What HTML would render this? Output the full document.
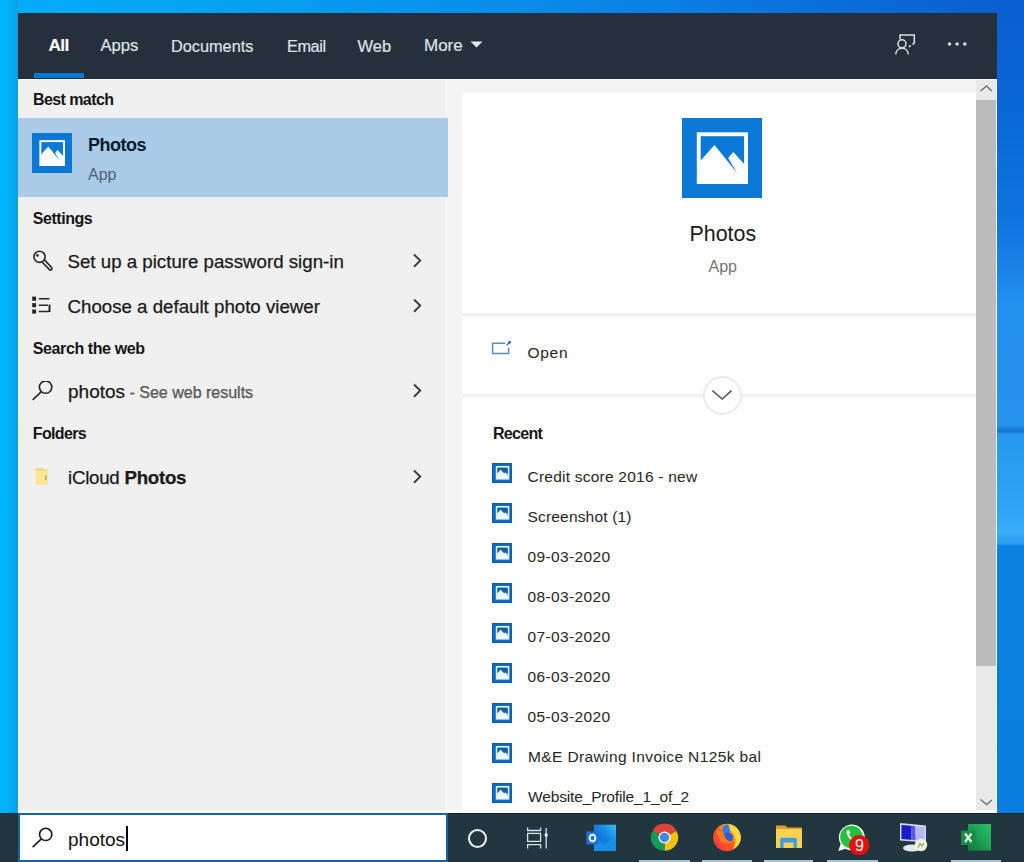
<!DOCTYPE html>
<html><head><meta charset="utf-8">
<style>
*{margin:0;padding:0;box-sizing:border-box}
html,body{width:1024px;height:862px;overflow:hidden;font-family:"Liberation Sans",sans-serif}
body{position:relative;background:#0a7ae0}
.a{position:absolute}
.t{position:absolute;white-space:nowrap;line-height:1}
#bg{left:0;top:0;width:1024px;height:862px;background:linear-gradient(90deg,#02b4fc 0px,#01b0f8 8px,#04a8ee 14px,#10a0e0 18px)}
#bgr{left:990px;top:0;width:34px;height:862px;background:linear-gradient(180deg,#0a5ed0 0px,#0a68d8 120px,#0f74e0 220px,#1a82e8 270px,#2290ee 300px,#2592ec 426px,#1878d8 429px,#1878d8 432px,#2898f0 434px,#2ea2f4 500px,#38acf8 528px,#3aaef8 532px,#2a98ee 544px,#0a80e0 546px,#0a7ee0 812px)}
#bgt{left:18px;top:0;width:1006px;height:14px;background:linear-gradient(90deg,#04acf8 0px,#069cf0 282px,#0a86e6 582px,#0a6cd8 832px,#0a5ed0 1006px)}
#hdr{left:18px;top:13px;width:979px;height:65.6px;background:#25303c}
.tab{color:#dfe2e5;font-size:16.3px;top:37.6px;-webkit-text-stroke:0.2px #dfe2e5}
#ind{left:34px;top:72.5px;width:50px;height:5px;background:#0078d7}
#left{left:18px;top:78.6px;width:427px;height:731.4px;background:#f0f0f0;border-top:1.4px solid #fafafa}
#rgap{left:445px;top:78.6px;width:552px;height:731.4px;background:#f4f4f4;border-top:1.4px solid #fafafa}
#sel{left:18px;top:118px;width:430px;height:79px;background:#aacce9}
.hd{font-weight:bold;font-size:16px;color:#151515}
.it{font-size:18.7px;color:#1a1a1a;-webkit-text-stroke:0.25px #1a1a1a}
#rp{left:462px;top:93px;width:514px;height:717px;background:#fff}
#bstrip{left:18px;top:810px;width:979px;height:3px;background:#f9f9f9}
#sb{left:976px;top:80px;width:20px;height:730px;background:#e9e9e9}
#thumb{left:976px;top:100px;width:20px;height:565.5px;background:#bbbbbb}
.rc{font-size:15.5px;color:#262626;letter-spacing:0.23px}
#task{left:0;top:813px;width:1024px;height:49px;background:#21363f;border-top:1px solid #15212a}
#sbox{left:17.5px;top:813px;width:430.5px;height:49px;background:#fff;border:2.5px solid #1862a8;border-bottom-width:2.5px}
</style></head>
<body>
<div id="bg" class="a"></div><div id="bgr" class="a"></div><div id="bgt" class="a"></div>
<div id="hdr" class="a"></div>
<div class="t tab" style="left:48.4px;color:#fff;font-size:17.3px;top:37px;font-weight:bold;letter-spacing:-0.6px">All</div>
<div class="t tab" style="left:100.5px;font-size:16.6px">Apps</div>
<div class="t tab" style="left:171px">Documents</div>
<div class="t tab" style="left:287px;letter-spacing:-0.4px">Email</div>
<div class="t tab" style="left:357.5px;font-size:16.5px">Web</div>
<div class="t tab" style="left:424px;font-size:17px;top:36.6px">More</div>
<svg class="a" style="left:470px;top:41px" width="13" height="7" viewBox="0 0 13 7"><path d="M0.5 0.5 L12.5 0.5 L6.5 6.5 Z" fill="#e6e8ea"/></svg>
<div id="ind" class="a"></div>
<!-- feedback icon -->
<svg class="a" style="left:890px;top:30px" width="30" height="30" viewBox="0 0 30 30" fill="none" stroke="#d8dde2" stroke-width="1.6">
  <path d="M10 9.2 V5 H24.3 V12.9 L22.5 14.5"/>
  <path d="M19 17 L20.8 15.4"/>
  <circle cx="12" cy="13.8" r="4"/>
  <path d="M5.6 24.3 C6 20.3 9 18.2 12 18.2 C15 18.2 18 20.3 18.4 24.3"/>
</svg>
<!-- ellipsis -->
<svg class="a" style="left:945px;top:40px" width="24" height="8" viewBox="0 0 24 8"><circle cx="4.5" cy="4" r="1.8" fill="#d6d9dc"/><circle cx="12.1" cy="4" r="1.8" fill="#d6d9dc"/><circle cx="19.8" cy="4" r="1.8" fill="#d6d9dc"/></svg>

<div id="rgap" class="a"></div>
<div id="left" class="a"></div>
<div id="sel" class="a"></div>
<div class="t hd" style="left:33px;top:92px;letter-spacing:-0.58px">Best match</div>
<svg class="a" style="left:32px;top:133px" width="40" height="40" viewBox="0 0 80 80"><use href="#ph"/></svg>
<div class="t" style="left:88px;top:135.6px;font-size:18px;letter-spacing:-0.5px;font-weight:bold;color:#0b1a2a">Photos</div>
<div class="t" style="left:88px;top:167px;font-size:16px;color:#4d6274">App</div>

<div class="t hd" style="left:32.8px;top:211px;letter-spacing:-0.45px">Settings</div>
<div class="t it" style="left:67.5px;top:252.9px">Set up a picture password sign-in</div>
<div class="t it" style="left:67.5px;top:297.7px">Choose a default photo viewer</div>
<div class="t hd" style="left:32.8px;top:341.1px;letter-spacing:-0.4px">Search the web</div>
<div class="t it" style="left:68px;top:382.4px;font-size:19px">photos<span style="font-size:16px;color:#6b6b6b"> - See web results</span></div>
<div class="t hd" style="left:32.8px;top:426.1px;letter-spacing:-0.64px">Folders</div>
<div class="t it" style="left:68px;top:468.5px;letter-spacing:-0.25px">iCloud <b style="font-weight:bold">Photos</b></div>


<!-- key icon -->
<svg class="a" style="left:31px;top:250px" width="24" height="22" viewBox="0 0 24 22" fill="none" stroke="#262626" stroke-width="1.6">
  <circle cx="8.5" cy="6.8" r="5.6"/>
  <path d="M13.3 9.6 L20.56 17.54 A1.5 1.5 0 0 1 18.44 19.66 L11.3 12.2" stroke-linejoin="round"/>
  <circle cx="6.4" cy="5.4" r="1.3" fill="#262626" stroke="none"/>
</svg>
<!-- list icon -->
<svg class="a" style="left:32px;top:295px" width="22" height="20" viewBox="0 0 22 20">
  <rect x="0.2" y="1.6" width="3.9" height="4.2" fill="#262626"/>
  <rect x="0.2" y="8.1" width="3.9" height="4.1" fill="#262626"/>
  <rect x="0.2" y="14.5" width="3.9" height="4.1" fill="#262626"/>
  <path d="M6.8 3.7 H17.5 M6.8 10.2 H16 M6.8 16.5 H17" stroke="#262626" stroke-width="1.5" fill="none"/>
  <path d="M17.5 9.6 V17" stroke="#111" stroke-width="1.8" fill="none"/>
</svg>
<!-- search icon -->
<svg class="a" style="left:31px;top:381px" width="24" height="22" viewBox="0 0 24 22" fill="none" stroke="#222" stroke-width="1.6">
  <circle cx="14.6" cy="6.1" r="6.2"/>
  <path d="M10.4 10.6 L1.7 18.8"/>
</svg>
<!-- folder icon -->
<svg class="a" style="left:34px;top:466px" width="16" height="20" viewBox="0 0 16 20">
  <path d="M1.7 2 H9 L10.5 3.5 H13.5 V18.4 H1.7 Z" fill="#f0dc80"/>
  <path d="M1.7 5 H13.5 V18.4 H1.7 Z" fill="#fde690"/>
  <rect x="11" y="9.5" width="1.6" height="4.5" fill="#c0a870"/>
</svg>
<svg class="a" style="left:411px;top:253px" width="12" height="16" viewBox="0 0 12 16"><path d="M3 1.5 L9.2 7.6 L3 13.7" fill="none" stroke="#3a3a3a" stroke-width="1.9"/></svg><svg class="a" style="left:411px;top:298px" width="12" height="16" viewBox="0 0 12 16"><path d="M3 1.5 L9.2 7.6 L3 13.7" fill="none" stroke="#3a3a3a" stroke-width="1.9"/></svg><svg class="a" style="left:411px;top:383px" width="12" height="16" viewBox="0 0 12 16"><path d="M3 1.5 L9.2 7.6 L3 13.7" fill="none" stroke="#3a3a3a" stroke-width="1.9"/></svg><svg class="a" style="left:411px;top:469px" width="12" height="16" viewBox="0 0 12 16"><path d="M3 1.5 L9.2 7.6 L3 13.7" fill="none" stroke="#3a3a3a" stroke-width="1.9"/></svg>
<div id="rp" class="a"></div><div id="bstrip" class="a"></div>
<div id="sb" class="a"></div>
<div id="thumb" class="a"></div>

<svg class="a" style="left:682px;top:118px" width="80" height="80" viewBox="0 0 80 80"><use href="#ph"/></svg>
<div class="t" style="left:689.5px;top:224.4px;font-size:21.4px;color:#1a1a1a">Photos</div>
<div class="t" style="left:708.5px;top:259.3px;font-size:16px;color:#767676">App</div>

<div class="t rc" style="left:527.5px;top:345.0px;letter-spacing:0.7px">Open</div>
<div class="t hd" style="left:493px;top:425.5px;letter-spacing:-0.7px">Recent</div>
<div class="t rc" style="left:527.5px;top:469.1px">Credit score 2016 - new</div>
<div class="t rc" style="left:527.5px;top:509.1px;letter-spacing:0.18px">Screenshot (1)</div>
<div class="t rc" style="left:527.5px;top:549.1px;letter-spacing:0.38px">09-03-2020</div>
<div class="t rc" style="left:527.5px;top:589.1px;letter-spacing:0.38px">08-03-2020</div>
<div class="t rc" style="left:527.5px;top:629.1px;letter-spacing:0.38px">07-03-2020</div>
<div class="t rc" style="left:527.5px;top:669.1px;letter-spacing:0.38px">06-03-2020</div>
<div class="t rc" style="left:527.5px;top:709.1px;letter-spacing:0.38px">05-03-2020</div>
<div class="t rc" style="left:528px;top:749.1px;letter-spacing:0.38px">M&amp;E Drawing Invoice N125k bal</div>
<div class="t rc" style="left:528px;top:789.1px;letter-spacing:-0.15px">Website_Profile_1_of_2</div>


<div class="a" style="left:462px;top:313px;width:514px;height:3px;background:#f1f1f1"></div>
<div class="a" style="left:462px;top:394px;width:514px;height:3px;background:#f1f1f1"></div>
<div class="a" style="left:702.5px;top:375.5px;width:39.5px;height:39px;border-radius:50%;background:#fff;border:2px solid #ececec"></div>
<svg class="a" style="left:711px;top:387px" width="24" height="16" viewBox="0 0 24 16"><path d="M1.4 3.6 L11.3 12 L20.5 3.6" fill="none" stroke="#555" stroke-width="1.5"/></svg>
<!-- open icon -->
<svg class="a" style="left:490px;top:338px" width="24" height="20" viewBox="0 0 24 20" fill="none">
  <path d="M15 5.2 H2.6 V15.6 H18.6 V9.5" stroke="#5a8cba" stroke-width="1.5"/>
  <path d="M16.5 7.6 L19.3 4.6" stroke="#3f7cc0" stroke-width="1.4"/>
  <circle cx="19.6" cy="4.3" r="1.5" fill="#2f6fc0"/>
</svg>
<!-- scroll arrows -->
<svg class="a" style="left:979px;top:83px" width="15" height="10" viewBox="0 0 15 10"><path d="M1.5 8 L7.6 3 L12.8 8" fill="none" stroke="#707070" stroke-width="1.4"/></svg>
<svg class="a" style="left:979px;top:797px" width="15" height="10" viewBox="0 0 15 10"><path d="M1.5 2.5 L7.7 7.5 L12.8 3" fill="none" stroke="#707070" stroke-width="1.4"/></svg>
<svg class="a" style="left:492px;top:463px" width="20" height="20" viewBox="0 0 20 20"><use href="#phs"/></svg><svg class="a" style="left:492px;top:503px" width="20" height="20" viewBox="0 0 20 20"><use href="#phs"/></svg><svg class="a" style="left:492px;top:543px" width="20" height="20" viewBox="0 0 20 20"><use href="#phs"/></svg><svg class="a" style="left:492px;top:583px" width="20" height="20" viewBox="0 0 20 20"><use href="#phs"/></svg><svg class="a" style="left:492px;top:623px" width="20" height="20" viewBox="0 0 20 20"><use href="#phs"/></svg><svg class="a" style="left:492px;top:663px" width="20" height="20" viewBox="0 0 20 20"><use href="#phs"/></svg><svg class="a" style="left:492px;top:703px" width="20" height="20" viewBox="0 0 20 20"><use href="#phs"/></svg><svg class="a" style="left:492px;top:743px" width="20" height="20" viewBox="0 0 20 20"><use href="#phs"/></svg><svg class="a" style="left:492px;top:783px" width="20" height="20" viewBox="0 0 20 20"><use href="#phs"/></svg>
<div id="task" class="a"></div>
<div id="sbox" class="a"></div>
<div class="t" style="left:68px;top:829.9px;font-size:19px;color:#111">photos</div>
<div class="a" style="left:126px;top:826px;width:1.5px;height:25px;background:#000"></div>


<!-- search box icon -->
<svg class="a" style="left:30px;top:826px" width="24" height="24" viewBox="0 0 24 24" fill="none" stroke="#1a1a1a" stroke-width="1.6">
  <circle cx="15.7" cy="8.4" r="6.1"/>
  <path d="M11.4 12.8 L2.7 21.1"/>
</svg>
<!-- cortana -->
<div class="a" style="left:467.8px;top:828.6px;width:19.6px;height:19.4px;border-radius:50%;border:2.6px solid #eef2f4"></div>
<!-- task view -->
<svg class="a" style="left:520px;top:820px" width="35" height="35" viewBox="0 0 35 35" fill="none" stroke="#d8e2e6" stroke-width="1.3">
  <path d="M7.6 7.5 V10.5 H20.6 V7.5"/>
  <rect x="7.6" y="13.4" width="13" height="8"/>
  <path d="M7.6 28.5 V24.6 H20.6 V28.5"/>
  <path d="M26.2 8 V28.5"/>
  <circle cx="26.2" cy="15" r="1.7" fill="#e8eef0" stroke="none"/>
</svg>
<!-- outlook -->
<svg class="a" style="left:584px;top:822px" width="34" height="30" viewBox="0 0 34 30">
  <defs><linearGradient id="olg" x1="0" y1="1" x2="1" y2="0"><stop offset="0" stop-color="#0a5cc8"/><stop offset="0.6" stop-color="#1688e0"/><stop offset="1" stop-color="#3cc0f8"/></linearGradient></defs>
  <rect x="10" y="2.7" width="22" height="26.3" fill="url(#olg)"/>
  <path d="M10 16 L21 22 L32 16 L32 29 L10 29 Z" fill="#1a8ee6"/>
  <rect x="2.3" y="9.6" width="12.4" height="13" rx="1" fill="#1a72d8"/>
  <ellipse cx="8.5" cy="16.1" rx="2.9" ry="3.4" fill="none" stroke="#f4faff" stroke-width="1.9"/>
</svg>
<!-- chrome -->
<svg class="a" style="left:650px;top:823px" width="29" height="29" viewBox="0 0 48 48">
  <path d="M24 24 L4.3 13.1 A22 22 0 0 1 43.7 13.1 Z" fill="#db4437"/>
  <path d="M24 24 L43.7 13.1 A22 22 0 0 1 24 46 Z" fill="#f4c20d"/>
  <path d="M24 24 L24 46 A22 22 0 0 1 4.3 13.1 Z" fill="#0f9d58"/>
  <circle cx="24" cy="24" r="10" fill="#fff"/>
  <circle cx="24" cy="24" r="7.8" fill="#4285f4"/>
</svg>
<!-- firefox -->
<svg class="a" style="left:712px;top:822px" width="30" height="30" viewBox="0 0 30 30">
  <defs><linearGradient id="ffg" x1="0" y1="1" x2="1" y2="0"><stop offset="0" stop-color="#ff2a5a"/><stop offset="0.45" stop-color="#ff5a1a"/><stop offset="0.75" stop-color="#ffb21a"/><stop offset="1" stop-color="#ffe84a"/></linearGradient></defs>
  <circle cx="15" cy="15.5" r="13.8" fill="url(#ffg)"/>
  <ellipse cx="14.5" cy="7.5" rx="4" ry="5" fill="#2f7de8"/>
  <circle cx="16" cy="15.5" r="5" fill="#2a5ad8"/>
  <path d="M4 9 C7.5 8 11 10 12.5 13 C13.5 17 15.5 19.5 20 19 C16.5 22.5 10 22 7.5 17.5 Z" fill="#ff7a1a"/>
  <path d="M16.5 2.5 C23.5 3 28.8 9 28.8 15.5 C28.8 20.5 25.5 25 21 27 C25 20.5 24 12 18 8 Z" fill="#ffd83a"/>
</svg>
<!-- explorer -->
<svg class="a" style="left:775px;top:825px" width="28" height="24" viewBox="0 0 28 24">
  <path d="M1 0.5 H10 L12.5 2.5 H27 V23 H1 Z" fill="#e0a020"/>
  <rect x="1" y="4" width="26" height="19" fill="#fcd050"/>
  <path d="M5.2 23 V14.5 Q5.2 12.8 7 12.8 H20 Q21.8 12.8 21.8 14.5 V23 H18.5 V17.5 H8.5 V23 Z" fill="#3a9ee0"/>
</svg>
<!-- whatsapp -->
<svg class="a" style="left:830px;top:815px" width="40" height="40" viewBox="0 0 40 40">
  <path d="M8.3 36 L10.6 29 A13 13 0 1 1 15.5 33.8 Z" fill="#f4fff4"/>
  <circle cx="21.4" cy="22" r="11.2" fill="#23c23e"/>
  <path d="M16.5 16 C16.5 21.5 21 26.5 26.5 27 L28 24.3 L24.8 22.6 L23.5 23.9 C21.6 23.1 19.8 21.3 19 19.3 L20.3 18 L18.8 14.8 Z" fill="#fff"/>
  <circle cx="29.2" cy="30.3" r="10.2" fill="#e8100f"/>
  <text x="29.4" y="36" font-family="Liberation Sans" font-size="16" fill="#fff" text-anchor="middle">9</text>
</svg>
<!-- remote desktop -->
<svg class="a" style="left:898px;top:821px" width="32" height="32" viewBox="0 0 32 32">
  <path d="M2 2 L28 4.5 L28 21.5 L2 19.5 Z" fill="#d0d8f4"/>
  <path d="M3.5 4 L26.5 6 L26.5 20 L3.5 18 Z" fill="#b8b8f0"/>
  <path d="M3.5 4 L13 4.8 L13.5 18.8 L3.5 18 Z" fill="#1a1ac8"/>
  <path d="M13 4.8 L17 5.2 L17.5 19 L13.5 18.8 Z" fill="#5a5ae0"/>
  <ellipse cx="14" cy="27" rx="9" ry="3.6" fill="#e6eae6"/>
  <circle cx="23" cy="24" r="6.2" fill="#eef2e6"/>
  <path d="M20 26.5 L22 22.5 L24 25 L26 22" stroke="#8ab060" stroke-width="1.3" fill="none"/>
</svg>
<!-- excel -->
<svg class="a" style="left:960px;top:823px" width="32" height="28" viewBox="0 0 32 28">
  <defs><linearGradient id="xlg" x1="0" y1="1" x2="1" y2="0"><stop offset="0" stop-color="#0e7a3c"/><stop offset="1" stop-color="#2cc46a"/></linearGradient></defs>
  <rect x="8" y="1" width="23" height="26.5" fill="url(#xlg)"/>
  <rect x="1" y="7.5" width="14.5" height="14.5" fill="#1a8a4a"/>
  <path d="M5 10.5 L11.5 19 M11.5 10.5 L5 19" stroke="#d8f5dc" stroke-width="2.2"/>
</svg>
<div class="a" style="left:639px;top:860px;width:51px;height:2px;background:#a8c0d4"></div><div class="a" style="left:702px;top:860px;width:50px;height:2px;background:#a8c0d4"></div><div class="a" style="left:764px;top:860px;width:49px;height:2px;background:#a8c0d4"></div><div class="a" style="left:827px;top:860px;width:51px;height:2px;background:#a8c0d4"></div><div class="a" style="left:951px;top:860px;width:50px;height:2px;background:#a8c0d4"></div>
<svg width="0" height="0" style="position:absolute">
  <defs>
    <g id="ph">
      <rect x="0" y="0" width="80" height="80" fill="#0a78d4"/>
      <rect x="14.8" y="14.3" width="51.2" height="51.7" fill="#fff"/>
      <rect x="18.7" y="18.2" width="43.4" height="44" fill="#0a78d4"/>
      <path d="M18.2 43 L32.5 27 L54.5 54.2 L56 66 L18.2 66 Z" fill="#fff"/>
      <path d="M46.2 40 L51.3 34 L62.6 46.5 L62.6 66 L53 66 L54.5 54.2 Z" fill="#fff"/>
    </g>
    <g id="phs">
      <rect x="0" y="0" width="20" height="20" fill="#0d6dc4"/>
      <rect x="0.6" y="0.6" width="18.8" height="18.8" fill="none" stroke="#0a5eb2" stroke-width="1.2"/>
      <rect x="3.8" y="3" width="13.5" height="13.6" fill="#e8f6ff"/>
      <rect x="5.3" y="4.6" width="10.5" height="8" fill="#0c5cb0"/>
      <path d="M5.3 10.2 L8.6 6.6 L12.2 10.5 L13.2 9.3 L15.8 11.8 L15.8 15 L5.3 15 Z" fill="#f4fbff"/>
    </g>
  </defs>
</svg>
</body></html>
